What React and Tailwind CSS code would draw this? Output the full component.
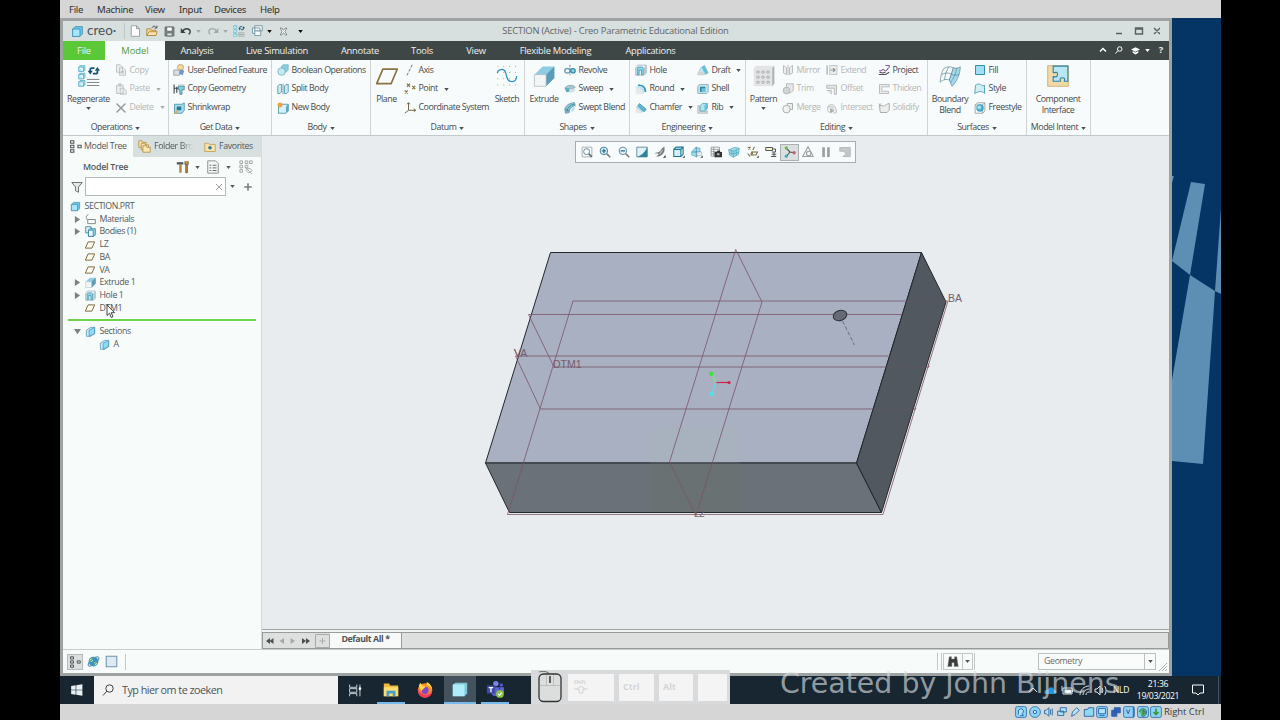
const TEAL = '#3d9fb8'
const DARK = '#2f5f70'
const GREY = '#b4b8b9'
const SKY = '#b5e8f6'

// All glyphs are drawn on a 16 x 16 grid
const ICONS = {
  cube: (
    <g stroke="#3a93b5" strokeWidth="1">
      <path d="M2 5 5 2h9v9l-3 3H2z" fill="#6ec5e4" />
      <path d="M2 5h9v9H2z" fill="#a9e4f8" />
    </g>
  ),
  newFile: <path d="M3 1h7l4 4v10H3zM10 1v4h4" fill="#fff" stroke="#858a8b" />,
  open: (
    <g stroke="#a57b2d">
      <path d="M1 14V5h5l1 2h6v7z" fill="#f6d58b" />
      <path d="m1 14 3-5h11l-2 5z" fill="#fbe6b0" />
      <path d="M8 4c1-3 4-3 5-1M14.500 1v3h-3" fill="none" stroke="#444" strokeWidth="1.300" />
    </g>
  ),
  save: (
    <g stroke="#4b5152">
      <path d="M1.500 1.500h13v13h-13z" fill="#8b9193" />
      <path d="M4 1.500h8v6H4z" fill="#fff" />
      <path d="M4 10h8v4.500H4z" fill="#d6dadb" />
    </g>
  ),
  undo: (
    <g>
      <path d="M3 8.500C6 4 12 3.500 13.500 8c.5 2-.5 3.500-2 4.500" fill="none" stroke="#3b4041" strokeWidth="2" />
      <path d="M1 4v6.500h6.500z" fill="#3b4041" />
    </g>
  ),
  redo: (
    <g>
      <path d="M13 8.500C10 4 4 3.500 2.500 8c-.5 2 .5 3.500 2 4.500" fill="none" stroke="#a2a8a9" strokeWidth="1.800" />
      <path d="M15 4v6.500H8.500z" fill="#a2a8a9" />
    </g>
  ),
  regen: (
    <g>
      <g fill={SKY} stroke={TEAL} strokeWidth=".5">
        <path d="M.5 1.500 1.500.5H5v3.200l-1 1H.5zM.5 7l1-1H5v3.200l-1 1H.5zM.5 12.300l1-1H5v3.200l-1 1H.5z" />
        <path d="M.5 1.500H4v3.200M.5 7H4v3.200M.5 12.300H4v3.200" fill="#e6f7fb" />
      </g>
      <path d="M6.500 10.500h9M6.500 12.700h9M6.500 14.900h9" stroke="#7d8283" strokeWidth=".7" />
      <path d="M12 2.200H9.900c-.8 0-1 .4-1 1.300v1M10.800 6.300h2.300c.7 0 1-.4 1-1.300v-1" fill="none" stroke="#17556f" strokeWidth="1.300" />
      <path d="M7 4.200h3.800L8.900 6.900zM12.200 4.200H16l-1.900-2.700z" fill="#17556f" />
    </g>
  ),
  windows: (
    <g fill="#f4f8f8" stroke="#5d8794">
      <path d="M5 1h10v7H5zM2 4h10v7H2z" />
      <path d="M5 8h8v6H5z" />
    </g>
  ),
  closeWin: <path d="m2 2 3 0 3 4 3-4h3l-3.500 6L14 14h-3l-3-4-3 4H2l3.500-6z" fill="#fff" stroke="#444" />,
  copy: <path d="M2 1h5l3 3v7H2zM6 5h5l3 3v7H6zM8 10h4M8 12h4" fill="#eceeee" stroke={GREY} />,
  paste: <path d="M2 3h9v11H2zM5 1h3v3H5zM7 7h5l3 3v5H7z" fill="#eceeee" stroke={GREY} />,
  del: <path d="m2 2 12 12M14 2 2 14" stroke="#989c9d" strokeWidth="2" />,
  udf: (
    <g>
      <path d="M1 8h8v7H1z" fill="#d9dce2" stroke="#8d93a0" />
      <circle cx="10" cy="4.500" r="4" fill="#f4dc9e" stroke="#bb954a" />
      <path d="m10 7 5 2-2 6-5-2z" fill="#7095c9" />
    </g>
  ),
  copyGeom: (
    <g>
      <path d="M1.500 2v12M5 5v8M1 7h6" stroke="#444" strokeWidth="1.500" />
      <path d="M7 4h8v5h-3v6H9V9H7z" fill="#7ed0e6" stroke={DARK} strokeWidth=".8" />
      <path d="M7 2h8v2H7z" fill="#c3c7c8" />
    </g>
  ),
  shrink: (
    <g>
      <path d="M2 3h10l3-2v10l-3 4H2z" fill="#a5dcec" stroke="#3a88a6" />
      <path d="M5 6h6v5H5z" fill="#2d7594" />
      <path d="m1 15 4-4 2 2-4 3z" fill="#e2ac4e" />
    </g>
  ),
  boolean: (
    <g>
      <path d="M6 3 8 1h7v7l-3 3H6z" fill="#8ccfe4" stroke="#4a9ab4" strokeWidth=".7" />
      <circle cx="6" cy="10" r="5" fill="#c8e9f2" stroke="#4a9ab4" strokeWidth=".8" />
    </g>
  ),
  split: (
    <g fill="#c7ecf6" stroke="#438da5">
      <path d="M1 4 3 2h3v10l-2 2H1zM10 4l2-2h3v10l-2 2h-3z" />
      <path d="M8 1v14" stroke="#777" />
    </g>
  ),
  newBody: (
    <g>
      <path d="m2 5 3-2h10v9l-3 3H2z" fill="#d8f1f8" stroke="#35819a" />
      <path d="m12 6 3-3v9l-3 3z" fill="#5aa9c2" />
      <circle cx="4" cy="4" r="3.300" fill="#eda338" />
    </g>
  ),
  plane: <path d="M5 3h10.500l-4.500 10.500H.5z" fill="none" stroke="#8a7340" strokeWidth="1.200" />,
  planeSm: <path d="M5 3h10.500L11 13H.5z" fill="#fdfaf0" stroke="#77643a" strokeWidth="1.500" />,
  axis: <path d="M11 1 4 15" stroke="#6f6a54" strokeWidth="1.300" strokeDasharray="4 2" />,
  point: (
    <path
      d="m4 1 4 4m0-4L4 5m7-1 4 4m0-4-4 4M1 10l4 4m0-4-4 4"
      stroke="#8a7340"
      strokeWidth="1.500"
      fill="none"
    />
  ),
  csys: <path d="M6 1v10h10M6 11l-5 4M4 3l2-2 2 2M13 9l2.500 2-2.500 2" stroke="#6f6443" strokeWidth="1.300" fill="none" />,
  sketch: (
    <g>
      <path
        d="M1 1h14.500M1 5.500h14.500M1 10h14.500M1 14.500h14.500"
        stroke="#9a9a9a"
        strokeWidth=".7"
        strokeDasharray=".7 3.600"
      />
      <path d="M1 6c0-3 5-4 6-.5s1 6 4 6.500 4-2 4-4" fill="none" stroke="#2593bd" strokeWidth=".9" />
    </g>
  ),
  extrude: (
    <g>
      <path d="M1 7 7 1h8.500v8.500l-6 6H1z" fill="#8fcbe2" />
      <path d="M9.500 7l6-6v8.500l-6 6z" fill="#5b9db9" />
      <path d="M1 7h8.500v8.500H1z" fill="#f4f5f5" stroke="#b3b9bb" strokeWidth=".5" />
    </g>
  ),
  revolve: (
    <g fill="none">
      <ellipse cx="4.500" cy="9" rx="3.500" ry="3" stroke="#6ba7bc" strokeWidth="2" />
      <ellipse cx="12" cy="9" rx="3" ry="3" fill="#7fd0e8" stroke="#2a86a4" strokeWidth="1.500" />
      <path d="M8 1v14" stroke="#6d6d6d" strokeDasharray="3 1" />
    </g>
  ),
  sweep: (
    <g>
      <path d="M1 7c2-5 13-5 14-1l-5 2c-1-1-3 0-3 2z" fill="#a4c8d3" stroke="#628e9b" strokeWidth=".7" />
      <path d="M1 7h6v5H3z" fill="#5ea8bd" />
      <path d="M7 9c3-1 6 0 8-3v4c-3 3-5 2-8 3z" fill="#d3dfe2" />
    </g>
  ),
  sweptBlend: (
    <g>
      <path d="M1 9C3 4 8 1 14 1l1 4C10 6 7 9 7 14l-5 1z" fill="#8fc5d6" stroke="#397a90" strokeWidth=".8" />
      <path d="M4 13c0-5 4-9 10-10M2 10l5 2" stroke="#2c7c97" fill="none" />
      <path d="m10 8 4-2v4l-4 4z" fill="#b9e0ea" />
    </g>
  ),
  hole: (
    <g>
      <path d="M1 5 4 1.500h11V12l-3 3H1z" fill="#eef6f8" stroke="#7b979f" strokeWidth=".8" />
      <path d="M3 5.500c0-2 8-2 8 0V14H8.500V8h-3v6H3z" fill="#8fd8ea" stroke="#27829f" strokeWidth=".9" />
      <path d="m12 5 3-3.500V12l-3 3z" fill="#b7c9ce" />
    </g>
  ),
  round: (
    <g>
      <path d="M1 6h9v9H1z" fill="#e6e9ea" />
      <path d="m1 6 3-3h4c4 0 7 3 7 7l-5 5c0-5-3-9-9-9z" fill="#c5e5ee" />
      <path d="M4 3c6-1 10 3 10 9" stroke="#2f97b8" strokeWidth="2" fill="none" />
    </g>
  ),
  chamfer: (
    <g>
      <path d="M1 7h9v8H1z" fill="#e6e9ea" />
      <path d="m1 7 5-5 9 7-5 5z" fill="#a8dcec" />
      <path d="m6 2 9 8-3 3-8-8z" fill="#65bad4" stroke="#277c98" strokeWidth=".8" />
    </g>
  ),
  draft: (
    <g>
      <path d="m1 14 4-9 5-3 5 10-5 2z" fill="#c5e8f1" stroke="#83a7b1" strokeWidth=".7" />
      <path d="m6 4 4-2 5 10-4 2z" fill="#65bfd9" />
      <path d="M1 11h9v4H1z" fill="#cfd3d4" />
    </g>
  ),
  shell: (
    <g>
      <path d="m1 4 2-2h12v10l-2 2H1z" fill="#c3e1e8" stroke="#89a5ad" />
      <path d="M4 5h7v7H4z" fill="#2b86a4" />
      <path d="M6 7h5v5H6z" fill="#6ac3dc" />
    </g>
  ),
  rib: (
    <g>
      <path d="M1 5h3v7h10v3H1z" fill="#d7dcdd" stroke="#88a1a8" strokeWidth=".7" />
      <path d="m4 5 3-3h7v6l-3 4H4z" fill="#b3e3ef" stroke="#55a3b9" />
      <path d="m10 4 4-2v7l-4 3z" fill="#6cc0d8" />
    </g>
  ),
  pattern: (
    <g>
      <path d="m.5 2.500 1.500-2h13.500V13.500L14 15.500H.5z" fill="#e3e4e5" />
      <path d="M14 2.500 15.500.5v13L14 15.500z" fill="#b1b3b4" />
      <path
        d="M2.800 4.500h1.600v1.300H2.800zm3.700 0h1.600v1.300H6.500zm3.700 0h1.600v1.300h-1.600zM2.800 8.200h1.600v1.300H2.800zm3.700 0h1.600v1.300H6.500zm3.700 0h1.600v1.300h-1.600zM2.800 11.900h1.600v1.300H2.800zm3.700 0h1.600v1.300H6.500zm3.700 0h1.600v1.300h-1.600z"
        fill="#fff"
        stroke="#8f9394"
        strokeWidth=".5"
      />
    </g>
  ),
  mirror: <path d="m2 2 4 3v9l-4-2zM14 2l-4 3v9l4-2zM8 1v14" fill="#eee" stroke={GREY} strokeWidth="1.200" />,
  trim: (
    <g stroke={GREY} strokeWidth="1.200">
      <path d="M6 1h9v9l-4 3H6z" fill="#e5e7e8" />
      <circle cx="6" cy="10" r="4.500" fill="#d1d4d5" />
    </g>
  ),
  merge: (
    <g stroke="#a8acad" strokeWidth="1.300">
      <path d="M7 2h7v8H7z" fill="#eceeee" />
      <circle cx="6" cy="9.500" r="5" fill="#f0f1f1" />
    </g>
  ),
  extend: (
    <g stroke={GREY} fill="none">
      <path d="M1.500 2v12" strokeWidth="2" />
      <path d="M5 2h9.500v12H5z" fill="#eceeee" />
      <path d="M6 8h6M9.500 5.500 12 8l-2.500 2.500" stroke="#8d9192" strokeWidth="1.500" />
    </g>
  ),
  offset: <path d="M1 3h13v12h-3V7H1zM1 10h6v5" fill="#e2e4e5" stroke={GREY} strokeWidth="1.200" />,
  intersect: (
    <g stroke="#aeb2b3">
      <path d="M2 8c0-6 12-8 12 6l-4 1" fill="#eceeee" />
      <circle cx="6" cy="10" r="4" fill="#f5f6f6" />
      <path d="m6 8 4 4-4 2z" fill="#a2a6a7" />
    </g>
  ),
  project: (
    <g fill="none">
      <path d="M2 8c2 4 4-3 6 0s4 0 6-3M10 2h5v3" stroke="#7c5a9c" strokeWidth="1.400" />
      <path d="M1 14h9l5-3M2 11l4 1 4-1" stroke="#4c4c58" strokeWidth="1.400" />
    </g>
  ),
  thicken: <path d="M2 2h13v3H5v6h9v3H2z" fill="#eceeee" stroke={GREY} strokeWidth="1.200" />,
  solidify: <path d="M2 5c3-1 5 1 7 0s3-3 6-3v9l-3 3H3zM1 2l3 3M4 2 1 5" fill="#eceeee" stroke="#a0a4a5" strokeWidth="1.200" />,
  boundary: (
    <g strokeWidth=".5" stroke="#5c8695">
      <path d="M3.500 2.500C6 1 8 1 10.500 2L7.500 11C5.500 10 3 10.500.8 12.500 1 8.500 2 5 3.500 2.500z" fill="#f5fafb" />
      <path d="M10.500 2c2 .5 3.500.5 5-.7-.2 5-2 10-6 14.200-1-2-1.500-3.500-2-4.500z" fill="#a3daee" />
      <path d="M2 7c2-1.500 4.500-1.500 6.700-.5 2 1.200 3.800 1.200 6 .3M7 1.500C5.500 4 4.500 7 4 10.700M13 2.200c-.7 4-2.500 8-4.700 10.800" fill="none" />
    </g>
  ),
  fill: <path d="M2 2h12v12H2z" fill="#9fe0f3" stroke="#2c8cab" strokeWidth="1.300" />,
  style: <path d="M2 3c4-3 8-1 9 1l3-1v11c-3-4-8-3-13 0z" fill="#d3edf4" stroke="#4e9fb7" strokeWidth="1.200" />,
  freestyle: (
    <g>
      <path d="m1.500 4 3-3h10v11l-3 3h-10zM1.500 4h10v11m0-11 3-3" fill="none" stroke="#8b9293" />
      <circle cx="8" cy="8" r="5" fill="#42abc6" />
      <circle cx="7" cy="7" r="2.500" fill="#a9e2ef" />
    </g>
  ),
  component: (
    <g strokeWidth=".5">
      <path d="M.5.5h15v15H.5z" fill="#f3d9a5" stroke="#c29f56" />
      <path
        d="M4.500.8h10.700v11h-2.500c-.5 0 .6-1.300 0-2s-2.400-.7-3 0 .5 2 0 2H4.500V8.500c0-.6 1.500.5 2.400 0s1-2.500.3-3-2.700.6-2.700 0z"
        fill="#b8e6f5"
        stroke="#2a83a5"
        strokeWidth=".8"
      />
    </g>
  ),
  tree: <path d="M2 1h4v3H2zM2 6.500h4v3H2zM2 12h4v3H2zM11 6.500h4v3h-4z" fill="none" stroke="#505657" strokeWidth="1.300" />,
  folders: (
    <g fill="#fbe7b5" stroke="#b08a3e">
      <path d="M1 1h4l1 2h4v6H1z" />
      <path d="M4 4h4l1 2h4v6H4z" />
      <path d="M6 7h4l1 2h4v6H6z" />
    </g>
  ),
  favorite: (
    <g>
      <path d="M1 3h5l1 1.500h8V14H1z" fill="#fae3a9" stroke="#b69751" />
      <circle cx="8" cy="9" r="2.400" fill="#2b7a9c" />
    </g>
  ),
  hammer: (
    <g>
      <path d="M1 2h8v3H1z" fill="#545b5e" />
      <path d="M4 5h3v10H4z" fill="#b28541" />
      <path d="M11 1v4h4V1M12 6h2v9h-2z" fill="#c8933f" stroke="#5e5340" />
    </g>
  ),
  list: (
    <g>
      <path d="M2 1h9l3 3v11H2z" fill="#f7f9f9" stroke="#7d8485" />
      <path d="M4 6h2M4 9h2M4 12h2M7.500 6H12M7.500 9H12M7.500 12H12" stroke="#555" />
    </g>
  ),
  treeOff: (
    <path
      d="M1 1h3v3H1zM1 6h3v3H1zM1 11h3v3H1zM7 1h3v3H7zM12 1h3v3h-3zM7 6h3v3H7zM8 12c2-3 5-3 7 0-2 3-5 3-7 0zM7 8l8 8"
      fill="none"
      stroke="#9a9fa0"
    />
  ),
  filter: <path d="M1 2h14L10 8v7l-4-2V8z" fill="#e4e7e8" stroke="#6c7273" strokeWidth="1.300" />,
  plus: <path d="M8 2v12M2 8h12" stroke="#7b8182" strokeWidth="2.600" />,
  materials: (
    <g fill="none" stroke="#777d7e" strokeWidth="1.300">
      <path d="M5 1C1 2 1 6 4 9" />
      <path d="M4 8h11v6H4z" fill="#fff" />
    </g>
  ),
  bodies: (
    <g stroke="#2e7f9e" strokeWidth="1.200">
      <path d="M1 1h8v9H1z" fill="#e0f2f7" />
      <path d="m5 6 2-2h8v9l-2 2H5z" fill="#9bdcef" />
      <path d="M5 6h7v9H5z" fill="#e9f8fc" />
    </g>
  ),
  section: (
    <g stroke="#3d8fb2">
      <path d="m2 6 6-4h6v9l-6 4H2z" fill="#cfe9f2" />
      <path d="m6 6 8-4v9l-8 4z" fill="#8fd9f5" />
    </g>
  ),
  globe: (
    <g>
      <circle cx="8" cy="8" r="6" fill="#3a97c0" />
      <path d="M4 5c3-2 4 0 3 2s-3 2-4 0zM9 9c2-1 4 0 3 2l-2 2z" fill="#cbe7a8" />
      <ellipse cx="8" cy="8" rx="8" ry="3" fill="none" stroke="#5b93aa" strokeWidth="1.300" transform="rotate(-40 8 8)" />
    </g>
  ),
  square: <path d="M1.500 1.500h13v13h-13z" fill="#dfe9f4" stroke="#6f94b2" strokeWidth="1.300" />,
  binoculars: <path d="M3 1h3v3h4V1h3l2 13H9.500V9h-3v5H1z" fill="#3b3b3b" stroke="#888" strokeWidth=".6" />,
  zoomFit: (
    <g fill="none" stroke="#5c6b70">
      <path d="M1.500 1.500h13v13h-13z" stroke="#92999b" />
      <circle cx="7.500" cy="7.500" r="4" stroke="#396f83" />
      <path d="m10.500 10.500 4 4" strokeWidth="2" />
    </g>
  ),
  zoomIn: (
    <g fill="none">
      <circle cx="6.500" cy="6.500" r="5" stroke="#2a7492" fill="#e5f5fa" strokeWidth="1.200" />
      <path d="M6.500 3.500v6M3.500 6.500h6" stroke="#2a7492" strokeWidth="1.800" />
      <path d="m10.500 10.500 4.500 4.500" stroke="#777" strokeWidth="2" />
    </g>
  ),
  zoomOut: (
    <g fill="none">
      <circle cx="6.500" cy="6.500" r="5" stroke="#517f91" fill="#eef7fa" strokeWidth="1.200" />
      <path d="M3.500 6.500h6" stroke="#2a7492" strokeWidth="1.800" />
      <path d="m10.500 10.500 4.500 4.500" stroke="#777" strokeWidth="2" />
    </g>
  ),
  repaint: (
    <g>
      <path d="M1 1.500h14v13H1z" fill="#e0f2f7" stroke="#4d7685" />
      <path d="M15 2v12.500H2C8 12 12 8 15 2z" fill="#2c82a0" />
    </g>
  ),
  render: (
    <g>
      <path d="M14 1v5c-1 5-6 9-12 8 3-1 4-2 4-4H1c1-2 5-1 7-3 2-3 3-5 6-6z" fill="#73797c" />
      <path d="M12 4c0 4-3 7-6 8 2-2 2-4 3-5z" fill="#b5babc" />
      <path d="M15.500 12v3.500H12z" fill="#333" />
    </g>
  ),
  displayCube: (
    <g>
      <path d="M1 4.500h9.500V14H1zM1 4.500 4 1.500h9.500V11l-3 3M10.500 4.500l3-3" fill="#d5f0f8" stroke="#1d7595" strokeWidth="1.400" />
      <path d="M15.700 12.500v3h-3z" fill="#333" />
    </g>
  ),
  saved: (
    <g>
      <path d="m1 8 5-6 6 1v9l-5 2-6-2z" fill="#a5dfed" stroke="#3a9cb8" strokeWidth=".8" />
      <path d="M7 1v14M1 8h12" stroke="#26738d" strokeWidth=".8" />
      <path d="M8 8h6v5H8z" fill="#e2eff3" stroke="#88aab5" strokeWidth=".7" />
      <path d="M15.700 12.500v3h-3z" fill="#333" />
    </g>
  ),
  camera: (
    <g>
      <path d="M1.500 1.500h11v12h-11zM1.500 4.500h11m-11 3h11m-11 3h11M5 1.500v12" fill="#fff" stroke="#7e8586" />
      <path d="M6 8h3l1-2h3l1 2h2v7H6z" fill="#333" />
      <circle cx="11" cy="11" r="1.800" fill="#aaa" />
    </g>
  ),
  persp: (
    <g stroke="#45a0b8" strokeWidth=".9">
      <path d="m1 5 8-3 6 1-1 8-7 4-5-3z" fill="#a2deec" />
      <path d="m1 5 7 2 7-4M8 7l-1 8M5 6v6M11 5v8M2 9l5 2 7-3" fill="none" />
    </g>
  ),
  datums: (
    <g fill="none" stroke="#796b43" strokeWidth="1.400">
      <path d="m1 1 4 4m0-4L1 5M10 1 4 13" strokeDasharray="5 1.500" />
      <path d="M8 8h6l-2 4H6zM1 10l3 4" />
      <path d="M15.700 12.500v3h-3z" fill="#333" stroke="none" />
    </g>
  ),
  annot: (
    <g fill="none" stroke="#4c5253" strokeWidth="1.300">
      <path d="M1 2h9v4H1z" fill="#fff3cc" />
      <path d="M10 4h4v4M14 8H9M12 8v6M9 11h6M8 14h7" />
    </g>
  ),
  spin: (
    <g>
      <path d="M2 2 8 8l6 1M8 8l-5 6" stroke="#455456" strokeWidth="1.500" fill="none" />
      <circle cx="3" cy="2.500" r="2.200" fill="#73b94a" />
      <circle cx="13.500" cy="9" r="2.200" fill="#d35a68" />
      <circle cx="3" cy="13.500" r="2.200" fill="#3fb2c9" />
    </g>
  ),
  simulate: (
    <g fill="none" stroke="#9b9fa0" strokeWidth="1.500">
      <path d="m8 1 7 13H1z" />
      <circle cx="9" cy="10" r="3" />
    </g>
  ),
  pause: <path d="M3 1.500h3.500v13H3zM9.500 1.500H13v13H9.500z" fill="#9a9fa0" />,
  shape: <path d="M1 2h14v12H5c5-2 5-6 0-7H1z" fill="#c3c7c8" stroke="#abafb0" />,
  chevronUp: <path d="m2 11 6-6 6 6" fill="none" stroke="#fff" strokeWidth="3" />,
  lens: (
    <g fill="none" stroke="#fff" strokeWidth="2">
      <circle cx="9.500" cy="6" r="4.500" />
      <path d="m6 9-5 6" />
    </g>
  ),
  learn: <path d="m8 2 8 4-8 4-8-4zM3 9l5 2.500L13 9v3l-5 3-5-3z" fill="#fff" />,
}

function Icon({ name, className = 'h-3 w-3' }) {
  return (
    <svg viewBox="0 0 16 16" className={`shrink-0 ${className}`}>
      {ICONS[name]}
    </svg>
  )
}

function Caret({ className = 'text-[#4a5051]' }) {
  return (
    <svg viewBox="0 0 6 4" className={`h-[3px] w-[5px] shrink-0 ${className}`}>
      <path d="M0 0h6L3 4z" fill="currentColor" />
    </svg>
  )
}

// Ribbon groups, left to right. A row is [icon, text, has menu, disabled].
const GROUPS = [
  {
    label: 'Operations',
    width: 'w-[106px]',
    cols: [
      { big: 'regen', text: ['Regenerate'], menu: true, width: 'w-[51px]' },
      {
        width: 'ml-px w-[53px]',
        rows: [
          ['copy', 'Copy', false, true],
          ['paste', 'Paste', true, true],
          ['del', 'Delete', true, true],
        ],
      },
    ],
  },
  {
    label: 'Get Data',
    width: 'w-[103px]',
    cols: [
      {
        width: 'ml-1 w-[98px]',
        rows: [['udf', 'User-Defined Feature'], ['copyGeom', 'Copy Geometry'], ['shrink', 'Shrinkwrap']],
      },
    ],
  },
  {
    label: 'Body',
    width: 'w-[99px]',
    cols: [
      {
        width: 'ml-[5px] w-[93px]',
        rows: [['boolean', 'Boolean Operations'], ['split', 'Split Body'], ['newBody', 'New Body']],
      },
    ],
  },
  {
    label: 'Datum',
    width: 'w-[154px]',
    cols: [
      { big: 'plane', text: ['Plane'], width: 'w-[31px]' },
      {
        width: 'ml-[2px] w-[86px]',
        rows: [['axis', 'Axis'], ['point', 'Point', true], ['csys', 'Coordinate System']],
      },
      { big: 'sketch', text: ['Sketch'], width: 'w-[34px]' },
    ],
  },
  {
    label: 'Shapes',
    width: 'w-[105px]',
    cols: [
      { big: 'extrude', text: ['Extrude'], width: 'w-[38px]' },
      {
        width: 'ml-px w-[65px]',
        rows: [['revolve', 'Revolve'], ['sweep', 'Sweep', true], ['sweptBlend', 'Swept Blend']],
      },
    ],
  },
  {
    label: 'Engineering',
    width: 'w-[116px]',
    cols: [
      {
        width: 'ml-[5px] w-[62px]',
        rows: [['hole', 'Hole'], ['round', 'Round', true], ['chamfer', 'Chamfer', true]],
      },
      {
        width: 'w-[48px]',
        rows: [['draft', 'Draft', true], ['shell', 'Shell'], ['rib', 'Rib', true]],
      },
    ],
  },
  {
    label: 'Editing',
    width: 'w-[182px]',
    cols: [
      { big: 'pattern', text: ['Pattern'], menu: true, width: 'w-[35px]' },
      {
        width: 'ml-px w-[44px]',
        rows: [
          ['mirror', 'Mirror', false, true],
          ['trim', 'Trim', false, true],
          ['merge', 'Merge', false, true],
        ],
      },
      {
        width: 'w-[52px]',
        rows: [
          ['extend', 'Extend', false, true],
          ['offset', 'Offset', false, true],
          ['intersect', 'Intersect', false, true],
        ],
      },
      {
        width: 'w-[48px]',
        rows: [
          ['project', 'Project'],
          ['thicken', 'Thicken', false, true],
          ['solidify', 'Solidify', false, true],
        ],
      },
    ],
  },
  {
    label: 'Surfaces',
    width: 'w-[99px]',
    cols: [
      { big: 'boundary', text: ['Boundary', 'Blend'], width: 'w-[44px]' },
      {
        width: 'ml-[2px] w-[52px]',
        rows: [['fill', 'Fill'], ['style', 'Style'], ['freestyle', 'Freestyle']],
      },
    ],
  },
  {
    label: 'Model Intent',
    width: 'w-[64px]',
    cols: [{ big: 'component', text: ['Component', 'Interface'], width: 'w-[62px]' }],
  },
]

function RibbonColumn({ col }) {
  if (col.big) {
    return (
      <div className={`flex shrink-0 flex-col items-center pt-[5px] ${col.width}`}>
        <Icon name={col.big} className="h-[22px] w-[22px]" />
        <div className="mt-[7px] flex flex-col items-center text-center leading-[11px]">
          {col.text.map((line) => (
            <span key={line}>{line}</span>
          ))}
        </div>
        {col.menu && (
          <div className="mt-[2px] flex">
            <Caret />
          </div>
        )}
      </div>
    )
  }
  return (
    <div className={`flex shrink-0 flex-col pt-px ${col.width}`}>
      {col.rows.map(([icon, text, menu, off]) => (
        <div key={text} className={`flex h-[18.700px] items-center ${off ? 'text-[#b3b7b8]' : ''}`}>
          <Icon name={icon} />
          <span className="ml-[2.500px]">{text}</span>
          {menu && (
            <span className="ml-[6px] flex">
              <Caret className={off ? 'text-[#a9adae]' : 'text-[#4a5051]'} />
            </span>
          )}
        </div>
      ))}
    </div>
  )
}

function Ribbon() {
  return (
    <div className="flex h-[76px] shrink-0 border-b border-[#c3c9ca] bg-[#f8fbfb] text-[8.800px] tracking-[-0.420px] text-[#44494a]">
      {GROUPS.map((g) => (
        <div key={g.label} className={`flex shrink-0 flex-col border-r border-[#ced3d4] ${g.width}`}>
          <div className="flex h-[59px]">
            {g.cols.map((col, i) => (
              <RibbonColumn key={i} col={col} />
            ))}
          </div>
          <div className="flex h-4 items-center justify-center gap-[3px] pt-[2px]">
            {g.label}
            <Caret />
          </div>
        </div>
      ))}
    </div>
  )
}

function TitleBar() {
  return (
    <div className="flex h-5 shrink-0 items-center bg-[#d8dfdf]">
      <Icon name="cube" className="ml-2 h-[13px] w-[13px]" />
      <span className="ml-[3px] w-[37px] font-[Lato] text-[13.500px] leading-none text-[#4d5354]">creo·</span>
      <div className="h-4 w-px bg-[#bfc6c6]" />
      <div className="flex w-[178px] items-center">
        <Icon name="newFile" className="ml-1 h-3 w-3" />
        <Icon name="open" className="ml-[5px] h-3 w-3" />
        <Icon name="save" className="ml-[6px] h-[11px] w-[11px]" />
        <Icon name="undo" className="ml-[5px] h-3 w-3" />
        <Caret className="ml-[4px] text-[#a2a8a9]" />
        <Icon name="redo" className="ml-[6px] h-3 w-3" />
        <Caret className="ml-[4px] text-[#a2a8a9]" />
        <Icon name="regen" className="ml-[5px] h-3 w-3" />
        <Icon name="windows" className="ml-[6px] h-3 w-3" />
        <Caret className="ml-[4px]" />
        <Icon name="closeWin" className="ml-[7px] h-[9px] w-[9px]" />
        <div className="ml-[3px] h-4 w-px bg-[#bfc6c6]" />
        <Caret className="ml-[7px]" />
      </div>
      <div className="flex w-[625px] justify-center text-[9.400px] tracking-[-0.210px] text-[#5f6566]">
        <span>SECTION (Active) - Creo Parametric Educational Edition</span>
      </div>
      <svg viewBox="0 0 44 10" className="ml-auto mr-[9px] h-[10px] w-11 fill-none stroke-[#5a5f60]">
        <path d="M0 7.500h6M19.500 2h7v6h-7zM19.500 3h7M38 2l6 6M44 2l-6 6" strokeWidth="1.400" />
      </svg>
    </div>
  )
}

const TABS = [
  ['Analysis', 'w-16'],
  ['Live Simulation', 'w-24'],
  ['Annotate', 'w-[70px]'],
  ['Tools', 'w-[54px]'],
  ['View', 'w-[54px]'],
  ['Flexible Modeling', 'w-[105px]'],
  ['Applications', 'w-[85px]'],
]

function TabBar() {
  return (
    <div className="flex h-[19px] shrink-0 items-center bg-[#3e4746] text-[9.400px] tracking-[-0.270px] text-[#eef1f1]">
      <div className="flex h-full w-[42px] items-center justify-center bg-[#5bc837] pt-[2px]">File</div>
      <div className="flex h-full w-[60px] items-center justify-center bg-[#f8fbfb] pt-[2px] tracking-normal text-[#4f9a3c]">Model</div>
      {TABS.map(([name, width]) => (
        <div key={name} className={`pt-[2px] text-center ${width}`}>
          {name}
        </div>
      ))}
      <div className="ml-auto mr-[6px] flex items-center">
        <Icon name="chevronUp" className="h-2 w-2" />
        <Icon name="lens" className="ml-[8px] h-2 w-2" />
        <Icon name="learn" className="ml-[8px] h-[9px] w-[9px]" />
        <Caret className="ml-[5px] text-white" />
        <span className="ml-[9px] font-bold">?</span>
      </div>
    </div>
  )
}

const TREE = [
  ['', 'cube', 'SECTION.PRT', 'pl-[7px]'],
  ['▶', 'materials', 'Materials'],
  ['▶', 'bodies', 'Bodies (1)'],
  ['', 'planeSm', 'LZ'],
  ['', 'planeSm', 'BA'],
  ['', 'planeSm', 'VA'],
  ['▶', 'extrude', 'Extrude 1'],
  ['▶', 'hole', 'Hole 1'],
  ['', 'planeSm', 'DTM1'],
]

function Twisty({ open }) {
  return (
    <svg viewBox="0 0 8 8" className="mr-[4px] h-[7px] w-[7px] shrink-0">
      <path d={open ? 'M0 1h8L4 7z' : 'M1 0 7 4 1 8z'} fill="#7c8283" />
    </svg>
  )
}

function TreeRow({ icon, text, twisty, open, indent = 'pl-[11px]' }) {
  return (
    <div className={`flex h-[12.750px] items-center ${indent}`}>
      {twisty && <Twisty open={open} />}
      <Icon name={icon} className={icon === 'planeSm' ? 'mr-px h-[10px] w-[10px]' : 'h-[11px] w-[11px]'} />
      <span className="ml-[3.500px]">{text}</span>
    </div>
  )
}

function Sidebar() {
  return (
    <aside className="flex w-[199px] shrink-0 flex-col border-r border-[#d5dada] bg-[#f7fbfa] text-[8.800px] tracking-[-0.370px] text-[#53595a]">
      <div className="flex h-[21px] bg-[#d8dfdf]">
        <div className="flex w-[70px] items-center bg-[#f7fbfa] pl-[6px]">
          <Icon name="tree" className="h-[13px] w-[13px]" />
          <span className="ml-[2px] pt-px">Model Tree</span>
        </div>
        <div className="flex w-[62px] items-center pl-[5px]">
          <Icon name="folders" className="h-[13px] w-[13px]" />
          <span className="ml-[3px] pt-px mask-r-from-70%">Folder Bro</span>
        </div>
        <div className="flex items-center pl-[9px]">
          <Icon name="favorite" />
          <span className="ml-[3px] pt-px">Favorites</span>
        </div>
      </div>
      <div className="flex h-5 items-center pl-5">
        <span className="w-[91px] pt-[2px] font-semibold tracking-[-0.250px]">Model Tree</span>
        <Icon name="hammer" className="ml-[2px] h-[14px] w-[13px]" />
        <Caret className="ml-[6px]" />
        <Icon name="list" className="ml-[6px] h-[14px] w-[14px]" />
        <Caret className="ml-[6px]" />
        <Icon name="treeOff" className="ml-[8px] h-[14px] w-[14px]" />
      </div>
      <div className="flex h-[19px] items-center pl-2">
        <Icon name="filter" className="h-[12px] w-[12px]" />
        <div className="ml-[2px] flex h-[19px] w-[141px] items-center justify-end border border-[#b4baba] bg-white pr-[3px]">
          <svg viewBox="0 0 6 6" className="h-[6px] w-[6px]">
            <path d="m0 0 6 6M6 0 0 6" stroke="#888" strokeWidth=".8" />
          </svg>
        </div>
        <Caret className="ml-[4px]" />
        <Icon name="plus" className="ml-[8px] h-[10px] w-[10px]" />
      </div>
      <div className="mt-[4px] flex h-[115px] flex-col">
        {TREE.map(([mark, icon, text, indent]) => (
          <TreeRow
            key={text}
            icon={icon}
            text={text}
            twisty={mark !== ''}
            indent={indent ?? (mark ? 'pl-[11px]' : 'pl-[22px]')}
          />
        ))}
      </div>
      <div className="ml-[5px] mt-[4px] h-[2px] w-[188px] shrink-0 bg-[#6fd44b]" />
      <div className="mt-[4px] flex flex-col">
        <TreeRow icon="section" text="Sections" twisty open indent="pl-[11px]" />
        <TreeRow icon="section" text="A" indent="pl-[36px]" />
      </div>
    </aside>
  )
}

function Model() {
  return (
    <svg viewBox="262 136 907 493" className="block h-[493px] w-[907px] shrink-0">
      <g stroke="#22272b" strokeWidth="1" strokeLinejoin="round">
        <path d="M550.500 252.500h371L856.500 463h-371z" fill="#a8b0c1" />
        <path d="M485.500 463h371l25 49.500h-372z" fill="#6a7178" />
        <path d="m921.500 252.500 24.500 49.500-64.500 210.500L856.500 463z" fill="#51585f" />
      </g>
      <path d="M650 427h90v35.500h-90z" fill="#a9b7b7" opacity=".25" />
      <path d="M650 463.500h90v48.500h-90z" fill="#687068" opacity=".3" />
      <g fill="none" stroke="#7c5367" strokeWidth=".8">
        <path d="M907 301H573l-65.500 213.500H883L948 301h-5" />
        <path d="m735.700 249.500 26.300 52.500-66 213.500-26.500-53.500z" />
        <path d="M902 314.500H528.500L554 367h332M888 356H515.500l25 53H873" />
        <path d="m902 314.500 27 52.500h-43M888 356l28 53h-43M907 301h38" opacity=".3" />
        <path d="m514 349 4 7M925 367h4l-1-4M913 409h3" />
      </g>
      <ellipse cx="840" cy="315.500" rx="7" ry="5" fill="#666a76" stroke="#292d34" transform="rotate(-18 840 315.500)" />
      <path d="m842.500 321 12 24" stroke="#6b5566" strokeWidth=".8" strokeDasharray="4 2" />
      <g className="font-['Liberation_Sans'] text-[10.500px]" fill="#775c6b">
        <text x="948" y="301.500">BA</text>
        <text x="514" y="357">VA</text>
        <text x="553" y="367.500">DTM1</text>
        <text x="694" y="516.500" fontSize="9">LZ</text>
      </g>
      <g strokeWidth="1.200" fill="none">
        <path d="M716 382.500h13" stroke="#d21f48" />
        <path d="m716 382.500-4.500-9" stroke="#7fe67c" />
        <path d="m716 382.500-4 11" stroke="#55dfea" />
        <circle cx="729" cy="382.500" r="1.600" fill="#d21f48" />
        <circle cx="711.200" cy="373.700" r="2.200" fill="#3fe23c" />
        <circle cx="712" cy="394" r="2.200" fill="#4fe3ee" />
      </g>
    </svg>
  )
}

const VIEW_TOOLS = [
  'zoomFit', 'zoomIn', 'zoomOut', 'repaint', 'render', 'displayCube', 'saved', 'camera',
  'persp', 'datums', 'annot', 'spin', 'simulate', 'pause', 'shape',
]

function Graphics() {
  return (
    <div className="relative flex w-[907px] flex-col bg-[#e8ecee]">
      <Model />
      <div className="absolute left-[313px] top-[5px] flex h-[22px] w-[281px] items-center border border-[#a7adaf] bg-[#f8fbfb] pl-[1.500px]">
        {VIEW_TOOLS.map((name) => (
          <div
            key={name}
            className={`flex h-[17px] w-[18.450px] items-center justify-center ${name === 'spin' ? 'border border-[#aab0b1] bg-[#dcdfe0]' : ''}`}
          >
            <Icon name={name} />
          </div>
        ))}
      </div>
      <div className="h-[3px] shrink-0 border-t border-[#a0a5a6] bg-[#f2f4f4]" />
      <div className="flex h-[17px] items-stretch border border-[#969b9c] bg-[#dedfdf]">
        <div className="flex w-[67px] items-center pl-[3px]">
          <svg viewBox="0 0 64 16" className="h-4 w-16">
            <path d="M7.500 5v6l-4-3zM4 5v6L0 8zM36 5l4 3-4 3zM40 5l4 3-4 3z" fill="#4b5051" />
            <path d="M18 5v6l-4.500-3zM24.500 5l4.500 3-4.500 3z" fill="#a4a9aa" />
            <path d="M49.500 1.500h14v13h-14zM53.500 8h6M56.500 5v6" fill="none" stroke="#a4a9aa" />
          </svg>
        </div>
        <div className="flex w-[72px] items-center justify-center border-r border-[#969b9c] bg-[#f8fafa] pb-px text-[8.800px] font-bold tracking-[-0.420px] text-[#505556]">
          Default All *
        </div>
      </div>
    </div>
  )
}

function StatusBar() {
  return (
    <div className="flex h-6 shrink-0 items-center border-t border-[#c7cdcd] bg-[#f7fbfa] text-[8.800px] tracking-[-0.350px] text-[#666b6c]">
      <div className="ml-1 flex h-4 w-4 items-center justify-center border border-[#b5baba] bg-[#dcdfdf]">
        <Icon name="tree" />
      </div>
      <Icon name="globe" className="ml-[4px] h-[13px] w-[13px]" />
      <Icon name="square" className="ml-[5px] h-[13px] w-[13px]" />
      <div className="ml-[7px] h-4 w-px bg-[#c2c7c7]" />
      <div className="ml-auto flex h-[17px] w-[5px] border-x border-[#c2c7c7]" />
      <div className="ml-px flex h-[17px] w-[30px] border border-[#c2c7c7]">
        <div className="flex w-[19px] items-center justify-center border-r border-[#c2c7c7]">
          <Icon name="binoculars" />
        </div>
        <div className="flex flex-1 items-center justify-center">
          <Caret />
        </div>
      </div>
      <div className="ml-px h-[17px] w-px bg-[#c2c7c7]" />
      <div className="ml-[63px] flex h-[17px] w-[118px] border border-[#b9bfbf] bg-[#fafcfc]">
        <span className="flex flex-1 items-center pl-[5px] pt-px">Geometry</span>
        <div className="flex w-[11px] items-center justify-center border-l border-[#b9bfbf]">
          <Caret />
        </div>
      </div>
      <svg viewBox="0 0 8 8" className="ml-[3px] mr-[2px] mt-[10px] h-2 w-2">
        <path d="M0 8l8-8M3 8l5-5M6 8l2-2" stroke="#a8adad" />
      </svg>
    </div>
  )
}

function Wallpaper() {
  return (
    <svg viewBox="1172 18 49 658" className="block h-[658px] w-[49px] bg-[#043564]">
      <path
        d="m1191 182 14 2-15 91-18-14zM1190 275l25 16-12 173-31-3v-81zM1215 291l6-83v86zM1172 176h2l-2 7z"
        fill="#5d8fb4"
      />
    </svg>
  )
}

function TaskButton({ className, children }) {
  return (
    <div className={`flex h-full items-center justify-center ${className}`}>
      <svg viewBox="0 0 20 20" className="h-[18px] w-[18px]">
        {children}
      </svg>
    </div>
  )
}

function Taskbar() {
  return (
    <div className="flex h-7 items-center bg-[#172631] text-white">
      <TaskButton className="w-[34px]">
        <path d="m3.500 5.500 5-.8V9.700h-5zM9.200 4.600l6.800-1v6.100H9.200zM3.500 10.300h5v5l-5-.8zM9.200 10.300H16v6.100l-6.800-1z" fill="#e8f0f4" />
      </TaskButton>
      <div className="flex h-full w-[244px] items-center bg-[#f2f2f2] text-[10.800px] tracking-[-0.530px] text-[#4d5254]">
        <svg viewBox="0 0 12 12" className="ml-2 mr-2 h-3 w-3 fill-none stroke-[#3c4143]">
          <circle cx="7.500" cy="4.500" r="3.700" />
          <path d="M5 7 1 11.500" />
        </svg>
        <span className="pt-px">Typ hier om te zoeken</span>
      </div>
      <TaskButton className="w-[34px]">
        <path d="M4 4v3h8V4M4 17v-3h8v3M4 8.500h8v4H4zM15.500 4v13" fill="none" stroke="#d8e1e6" />
        <circle cx="15.500" cy="8.500" r="1.500" fill="#fff" />
      </TaskButton>
      <TaskButton className="ml-[5px] w-7 border-b-2 border-[#76b9ed]">
        <path d="M2 4h6l1 2h9v12H2z" fill="#f0b93c" />
        <path d="M2 8h16v10H2z" fill="#fbdc73" />
        <path d="M5 18v-6h10v6h-3v-3H8v3z" fill="#4a9cc6" />
      </TaskButton>
      <TaskButton className="ml-[4px] w-8">
        <circle cx="10" cy="10.500" r="8" fill="#fb8b26" />
        <path d="M2.300 8c-1 5 2 10.500 7.700 10.500s8-4 8-8c-2 4-5 5-9 4.500S3 11 2.300 8z" fill="#f5385c" />
        <circle cx="10" cy="10.500" r="4" fill="#8247c9" />
        <path d="M12 1c4 2 6 5 6 9-1-3-3-4-5-5s-1-3-1-4zM3 5l2-3 2 3 4 1-3 3-2 2z" fill="#ffd84a" />
      </TaskButton>
      <TaskButton className="ml-[3px] w-8 border-b-2 border-[#76b9ed] bg-[#44525d]">
        <path d="m2 5 3-2h13v12l-3 3H2z" fill="#7fc8da" />
        <path d="M2 5h13v13H2z" fill="#aeeefa" />
      </TaskButton>
      <TaskButton className="ml-[5px] w-7 border-b-2 border-[#76b9ed]">
        <circle cx="11" cy="4" r="3" fill="#7b83eb" />
        <circle cx="17" cy="5.500" r="2" fill="#5059c9" />
        <path d="M6 8h9v6c0 5-8 5-9 1zM15.500 8H20v5c0 3-2 4-4.500 3z" fill="#5a62d0" />
        <path d="M1 6h9v9H1z" fill="#4048a8" />
        <path d="M3 8.500h5M5.500 8.500v5" stroke="#fff" strokeWidth="1.400" />
        <circle cx="15.500" cy="15.500" r="4.300" fill="#8bc34a" />
        <path d="m13.500 15.500 1.500 1.500 2.500-3" fill="none" stroke="#fff" strokeWidth="1.300" />
      </TaskButton>
      <svg viewBox="0 0 80 14" className="ml-auto mr-[4px] h-[14px] w-20 fill-none stroke-[#dfe6ea]">
        <path d="m0 9 4-4 4 4" />
        <path d="M16 11c-2-4 2-5 3-4 1-4 6-3 6 0 3 0 3 4 1 4z" fill="#2196dc" stroke="none" />
        <path d="M34 5h9v6h-9zM43.500 7v2M33 3v5" />
        <path d="M36 7h6v3h-6z" fill="#fff" />
        <path d="M51 12c0-5 4-9 9-9M54 12c0-3 3-6 6-6M57 12c0-2 1-3 3-3" />
        <path d="M66 6h2l3-3v9l-3-3h-2zM73 5c1 1 1 4 0 5M75.500 3c2 2 2 7 0 9" />
      </svg>
      <span className="w-[17px] text-[8.500px] tracking-[-0.300px]">NLD</span>
      <div className="ml-[6px] w-[44px] text-center text-[8.700px] leading-[12px] tracking-[-0.370px]">
        <div>21:36</div>
        <div>19/03/2021</div>
      </div>
      <svg viewBox="0 0 12 12" className="ml-[12px] h-3 w-3 fill-none stroke-white">
        <path d="M.5 1h11v8H8l-2 2-2-2H.5z" />
      </svg>
      <div className="ml-[14px] mr-[2px] h-7 w-px bg-[#45525c]" />
    </div>
  )
}

// Key presses shown by the recorder, floating over the taskbar
function KeyOverlay() {
  return (
    <div className="absolute left-[531px] top-[670px] flex h-[34px] w-[199px] items-center bg-[#d9dadb] text-[9px] font-bold text-[#d4d4d4]">
      <svg viewBox="0 0 24 32" className="ml-[7px] h-8 w-6">
        <path d="M1 1c3-1 10-1 11 3" fill="none" stroke="#666" />
        <rect x="1" y="3" width="22" height="27.500" rx="4.500" fill="#dcdddd" stroke="#333" strokeWidth="1.300" />
        <path d="M1.500 14.500h21M8.500 4v10.500M15.500 4v10.500" stroke="#aaa" strokeWidth=".6" />
        <path d="M12 5v7" stroke="#333" strokeWidth="1.500" />
      </svg>
      <div className="ml-[6px] flex h-[27px] w-[46px] flex-col pl-[6px] pt-[5px] bg-[#f4f4f4]">
        <span className="text-[5px] leading-[6px]">Shift</span>
        <svg viewBox="0 0 14 9" className="h-[9px] w-[14px] fill-none stroke-[#d2d2d2]">
          <path d="m7 1 4 3H9v4H5V4H3zM0 4h3M11 4h3" />
        </svg>
      </div>
      <div className="ml-[5px] flex h-[27px] w-[35px] items-center bg-[#f4f4f4] pl-1">Ctrl</div>
      <div className="ml-[5px] flex h-[27px] w-[34px] items-center bg-[#f4f4f4] pl-1">Alt</div>
      <div className="ml-[5px] h-[27px] w-[29px] bg-[#f4f4f4]" />
    </div>
  )
}

// Virtual machine device lights
const DEVICES = [
  <path key="disk" d="M4 10V7a3 3 0 1 1 4 2l2 2H6" />,
  <circle key="optical" cx="7" cy="7" r="2" />,
  <path key="audio" d="M3 5h2l3-3v10L5 9H3zM10 4v6M12 3v8" />,
  <path key="network" d="M5 2h7v5H5zM2 6h7v5H2z" />,
  <path key="usb" d="m3 12 1-5 5-5 3 3-5 5z" />,
  <path key="folder" d="M1.500 4h4l1-2h6v10h-11z" fill="#8fd8f5" />,
  <path key="display" d="M3 3h8v6H3zM4 11h6" />,
  <path key="record" d="M5 2h7v6H5zM2 5h6v7H2z" fill="#355fc2" />,
  <path key="cpu" d="m4 4 2 5 2-5M12 1v12" fill="none" stroke="#3d3c9c" />,
  <path key="mouse" d="M3 7c0-5 8-5 8 0s-5 6-6 4M7 5l3 2-3 3z" fill="#63bf45" />,
  <path key="keyboard" d="M7 3v6M4 7l3 3 3-3" stroke="#3b9c30" strokeWidth="2" fill="none" />,
]

// Devices drawn without the rounded plate behind them
const BARE = [2, 3, 4, 5, 7]

function VmStatus() {
  return (
    <div className="flex h-4 items-center bg-[#d6d6d6] pl-[955px] text-[9.500px] text-[#3a3a3a]">
      {DEVICES.map((shape, i) => (
        <svg key={i} viewBox="0 0 14 14" className="mr-[1.550px] h-3 w-3 fill-[#b5e4fa]">
          {!BARE.includes(i) && (
            <rect x=".7" y=".7" width="12.600" height="12.600" rx={i === 1 ? 6.300 : 2} fill="#8fd3f4" stroke="#2a6fae" />
          )}
          <g stroke="#1f5f9f" strokeWidth="1">{shape}</g>
        </svg>
      ))}
      <span className="pt-px tracking-[-0.050px]">Right Ctrl</span>
    </div>
  )
}

function App() {
  return (
    <div className="relative h-[720px] w-[1280px] overflow-hidden bg-black font-['Open_Sans','Noto_Sans',sans-serif] whitespace-nowrap">
      <div className="ml-[60px] flex w-[1161px] flex-col">
        <nav className="flex h-[18px] items-center bg-[#d6d6d6] pt-[2px] font-['Noto_Sans',sans-serif] text-[9.600px] tracking-[-0.300px] text-[#303030]">
          <span className="ml-[9px] w-[28px]">File</span>
          <span className="w-[48px]">Machine</span>
          <span className="w-[34px]">View</span>
          <span className="w-[35px]">Input</span>
          <span className="w-[46px]">Devices</span>
          <span>Help</span>
        </nav>
        <div className="flex h-[658px]">
          <div className="flex w-[1112px] flex-col border-[3px] border-[#9fa2a3]">
            <TitleBar />
            <TabBar />
            <Ribbon />
            <div className="flex h-[513px]">
              <Sidebar />
              <Graphics />
            </div>
            <StatusBar />
          </div>
          <Wallpaper />
        </div>
        <Taskbar />
        <VmStatus />
      </div>
      <KeyOverlay />
      <div className="absolute left-[780px] top-[669px] font-['DejaVu_Sans'] text-[28.400px] leading-[30px] text-[#d9dfe2]/65">
        Created by John Bijnens
      </div>
      <svg viewBox="0 0 10 15" className="absolute left-[106px] top-[304px] h-[15px] w-[10px]">
        <path d="M1 1v10.500l2.500-2.300L5.200 13.500l1.800-.8-1.800-4H8.500z" fill="#fff" stroke="#444" />
      </svg>
    </div>
  )
}

export default App
